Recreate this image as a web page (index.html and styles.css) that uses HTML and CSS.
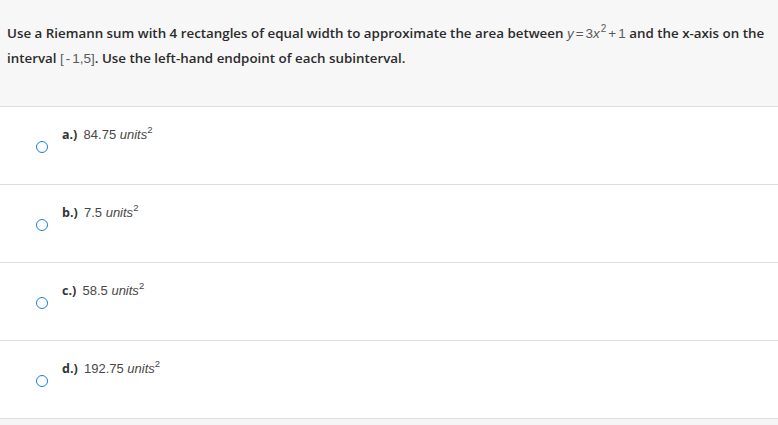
FILE: index.html
```html
<!DOCTYPE html>
<html>
<head>
<meta charset="utf-8">
<link rel="stylesheet" href="styles.css">
</head>
<body>
<div class="question">
  <p class="stem">Use a Riemann sum with 4 rectangles of equal width to approximate the area between <span class="m"><i>y</i><span class="op">=</span>3<i>x</i><sup>2</sup><span class="op">+</span>1</span> and the x-axis on the interval <span class="m">[<span class="op">-</span>1,5]</span>. Use the left-hand endpoint of each subinterval.</p>
</div>
<div class="options">
  <div class="opt"><span class="radio"></span><div class="label"><b>a.)</b> <span class="val">84.75 <i>units</i><sup>2</sup></span></div></div>
  <div class="opt"><span class="radio"></span><div class="label"><b>b.)</b> <span class="val">7.5 <i>units</i><sup>2</sup></span></div></div>
  <div class="opt"><span class="radio"></span><div class="label"><b>c.)</b> <span class="val">58.5 <i>units</i><sup>2</sup></span></div></div>
  <div class="opt"><span class="radio"></span><div class="label"><b>d.)</b> <span class="val">192.75 <i>units</i><sup>2</sup></span></div></div>
</div>
</body>
</html>
```
FILE: styles.css
```css
html, body { margin: 0; padding: 0; }
body { background: #f5f5f5; font-family: "Open Sans", "Lato", sans-serif; color: #2b2b2b; width: 778px; }
.question { background: #f7f7f7; height: 107px; border-bottom: 1px solid #dedede; padding: 0 7px; box-sizing: border-box; padding-top: 21px; }
.stem { margin: 0; font-size: 13.35px; font-weight: 600; line-height: 24px; letter-spacing: 0; }
.m { font-family: "Liberation Sans", Arial, sans-serif; font-weight: 400; color: #5a5a5a; font-size: 13.5px; }
.m i { font-style: italic; }
.m .op { margin: 0 2px; }
.m sup { font-size: 10px; line-height: 0; position: relative; top: -1px; margin-left: 1px; }
.options { background: #fff; }
.opt { height: 77px; border-bottom: 1px solid #dedede; display: flex; align-items: flex-start; }
.radio { width: 10px; height: 10px; border: 1.6px solid #1b7fd0; border-radius: 50%; margin: 34px 0 0 36px; flex: none; }
.label { margin: 19px 0 0 14px; font-size: 12.5px; }
.label b { font-family: "Open Sans", sans-serif; font-weight: 700; color: #333; }
.val { font-family: "Liberation Sans", Arial, sans-serif; color: #484848; font-size: 13px; margin-left: 3px; }
.val sup { font-size: 9.5px; line-height: 0; position: relative; top: -1px; }
```
